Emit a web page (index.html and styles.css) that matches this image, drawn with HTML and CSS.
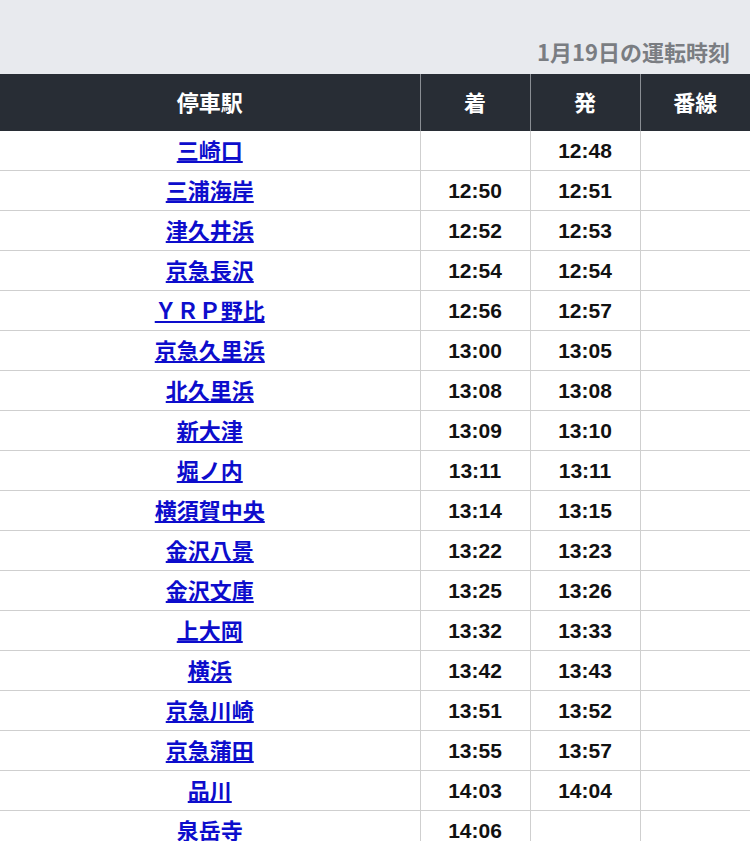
FILE: index.html
```html
<!DOCTYPE html>
<html lang="ja">
<head>
<meta charset="utf-8">
<link rel="stylesheet" href="styles.css">
</head>
<body>
<div class="top"><span class="date">1月19日の運転時刻</span></div>
<table class="tt">
<colgroup><col class="c-st"><col class="c-t"><col class="c-t"><col class="c-t"></colgroup>
<thead>
<tr><th>停車駅</th><th>着</th><th>発</th><th>番線</th></tr>
</thead>
<tbody>
<tr><td class="st"><a href="#">三崎口</a></td><td></td><td>12:48</td><td></td></tr>
<tr><td class="st"><a href="#">三浦海岸</a></td><td>12:50</td><td>12:51</td><td></td></tr>
<tr><td class="st"><a href="#">津久井浜</a></td><td>12:52</td><td>12:53</td><td></td></tr>
<tr><td class="st"><a href="#">京急長沢</a></td><td>12:54</td><td>12:54</td><td></td></tr>
<tr><td class="st"><a href="#">ＹＲＰ野比</a></td><td>12:56</td><td>12:57</td><td></td></tr>
<tr><td class="st"><a href="#">京急久里浜</a></td><td>13:00</td><td>13:05</td><td></td></tr>
<tr><td class="st"><a href="#">北久里浜</a></td><td>13:08</td><td>13:08</td><td></td></tr>
<tr><td class="st"><a href="#">新大津</a></td><td>13:09</td><td>13:10</td><td></td></tr>
<tr><td class="st"><a href="#">堀ノ内</a></td><td>13:11</td><td>13:11</td><td></td></tr>
<tr><td class="st"><a href="#">横須賀中央</a></td><td>13:14</td><td>13:15</td><td></td></tr>
<tr><td class="st"><a href="#">金沢八景</a></td><td>13:22</td><td>13:23</td><td></td></tr>
<tr><td class="st"><a href="#">金沢文庫</a></td><td>13:25</td><td>13:26</td><td></td></tr>
<tr><td class="st"><a href="#">上大岡</a></td><td>13:32</td><td>13:33</td><td></td></tr>
<tr><td class="st"><a href="#">横浜</a></td><td>13:42</td><td>13:43</td><td></td></tr>
<tr><td class="st"><a href="#">京急川崎</a></td><td>13:51</td><td>13:52</td><td></td></tr>
<tr><td class="st"><a href="#">京急蒲田</a></td><td>13:55</td><td>13:57</td><td></td></tr>
<tr><td class="st"><a href="#">品川</a></td><td>14:03</td><td>14:04</td><td></td></tr>
<tr><td class="st"><a href="#">泉岳寺</a></td><td>14:06</td><td></td><td></td></tr>
</tbody>
</table>
</body>
</html>
```
FILE: styles.css
```css
html, body {
  margin: 0;
  padding: 0;
  background: #fff;
  font-family: "Liberation Sans", "Noto Sans CJK JP", sans-serif;
}
.top {
  height: 74px;
  background: #e8eaee;
  display: flex;
  justify-content: flex-end;
  align-items: flex-end;
  padding: 0 20px 11px 0;
  box-sizing: border-box;
}
.date {
  font-family: "Noto Sans CJK JP", sans-serif;
  font-weight: 700;
  font-size: 22px;
  color: #7a7d82;
  line-height: 24px;
}
.tt {
  width: 750px;
  border-collapse: collapse;
  table-layout: fixed;
}
.c-st { width: 420px; }
.c-t { width: 110px; }
.tt th {
  height: 54px;
  background: #282d35;
  color: #fff;
  font-family: "Noto Sans CJK JP", sans-serif;
  font-weight: 700;
  font-size: 22px;
  line-height: 24px;
  padding: 0 0 3px;
  border-left: 1px solid #8a8e94;
  vertical-align: middle;
  text-align: center;
}
.tt th:first-child { border-left: none; }
.tt td {
  height: 39px;
  padding: 0;
  text-align: center;
  vertical-align: middle;
  font-weight: 700;
  font-size: 21px;
  line-height: 24px;
  color: #111;
  border-left: 1px solid #cfcfcf;
  border-bottom: 1px solid #cfcfcf;
}
.tt td.st { border-left: none; }
.st a {
  font-family: "Noto Sans CJK JP", sans-serif;
  font-weight: 700;
  font-size: 22px;
  line-height: 24px;
  color: #0d0dcc;
  text-decoration: underline;
  text-decoration-thickness: 2px;
  text-underline-offset: 2px;
}
```
